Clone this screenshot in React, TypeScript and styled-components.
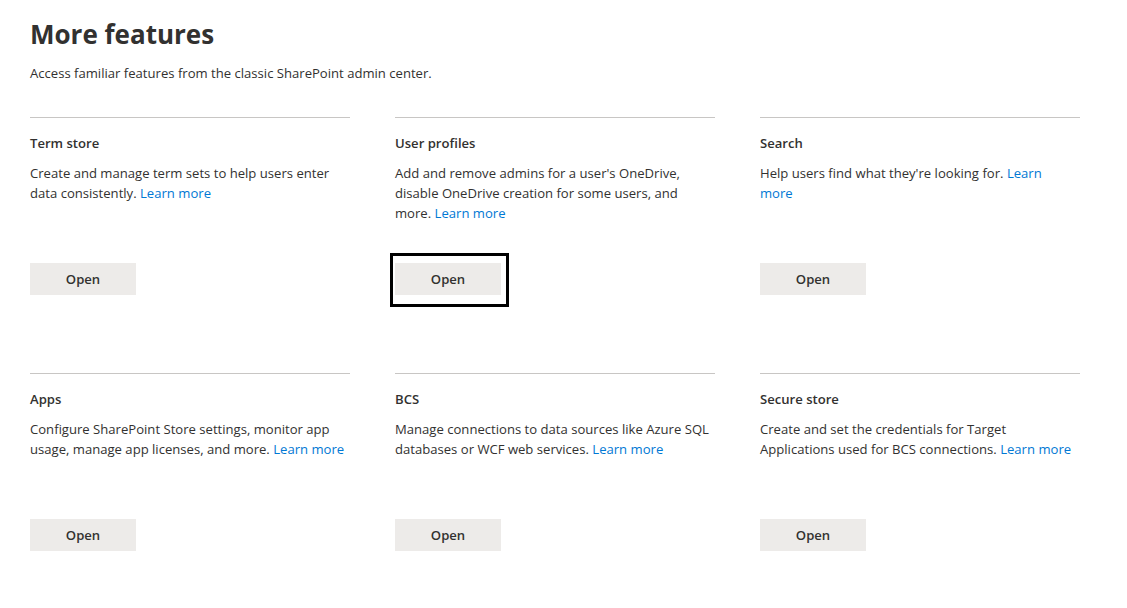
import React from 'react'
import styled, { createGlobalStyle } from 'styled-components'

const GlobalStyle = createGlobalStyle`
  body {
    margin: 0;
    background: #ffffff;
    font-family: 'Open Sans', 'Liberation Sans', sans-serif;
    color: #323130;
  }
`

const Page = styled.div`
  padding: 14px 30px 40px 30px;
`

const Heading = styled.h1`
  margin: 0;
  font-size: 26px;
  line-height: 40px;
  font-weight: 700;
  color: #323130;
`

const Subtitle = styled.p`
  margin: 9px 0 0 0;
  font-size: 13.1px;
  line-height: 20px;
`

const Grid = styled.div`
  display: grid;
  grid-template-columns: repeat(3, 320px);
  column-gap: 45px;
  row-gap: 78px;
  margin-top: 34px;
`

const Card = styled.div`
  display: flex;
  flex-direction: column;
  height: 178px;
  border-top: 1px solid #c8c6c4;
  padding-top: 15px;
  box-sizing: border-box;
`

const Title = styled.div`
  font-size: 13.1px;
  line-height: 20px;
  font-weight: 600;
`

const Description = styled.div<{ $maxWidth?: number }>`
  margin-top: 10px;
  max-width: ${(p) => (p.$maxWidth ? `${p.$maxWidth}px` : 'none')};
  font-size: 13.1px;
  line-height: 20px;
`

const Link = styled.a`
  color: #0078d4;
  text-decoration: none;
  cursor: pointer;
`

const OpenButton = styled.button<{ $focused?: boolean }>`
  position: relative;
  margin-top: auto;
  width: 106px;
  height: 32px;
  border: none;
  background: #edebe9;
  color: #323130;
  font-family: inherit;
  font-size: 13.1px;
  font-weight: 600;
  cursor: pointer;
  &::after {
    content: '';
    display: ${(p) => (p.$focused ? 'block' : 'none')};
    position: absolute;
    top: -10px;
    bottom: -12px;
    left: -5px;
    right: -8px;
    border: 3px solid #000;
  }
`

type Feature = {
  title: string
  text: string
  focused?: boolean
  textWidth?: number
}

const features: Feature[] = [
  {
    title: 'Term store',
    text: 'Create and manage term sets to help users enter data consistently.',
  },
  {
    title: 'User profiles',
    text: "Add and remove admins for a user's OneDrive, disable OneDrive creation for some users, and more.",
    focused: true,
  },
  {
    title: 'Search',
    text: "Help users find what they're looking for.",
    textWidth: 300,
  },
  {
    title: 'Apps',
    text: 'Configure SharePoint Store settings, monitor app usage, manage app licenses, and more.',
  },
  {
    title: 'BCS',
    text: 'Manage connections to data sources like Azure SQL databases or WCF web services.',
  },
  {
    title: 'Secure store',
    text: 'Create and set the credentials for Target Applications used for BCS connections.',
  },
]

export default function App() {
  return (
    <>
      <GlobalStyle />
      <Page>
        <Heading>More features</Heading>
        <Subtitle>Access familiar features from the classic SharePoint admin center.</Subtitle>
        <Grid>
          {features.map((f) => (
            <Card key={f.title}>
              <Title>{f.title}</Title>
              <Description $maxWidth={f.textWidth}>
                {f.text} <Link>Learn more</Link>
              </Description>
              <OpenButton $focused={f.focused}>Open</OpenButton>
            </Card>
          ))}
        </Grid>
      </Page>
    </>
  )
}
